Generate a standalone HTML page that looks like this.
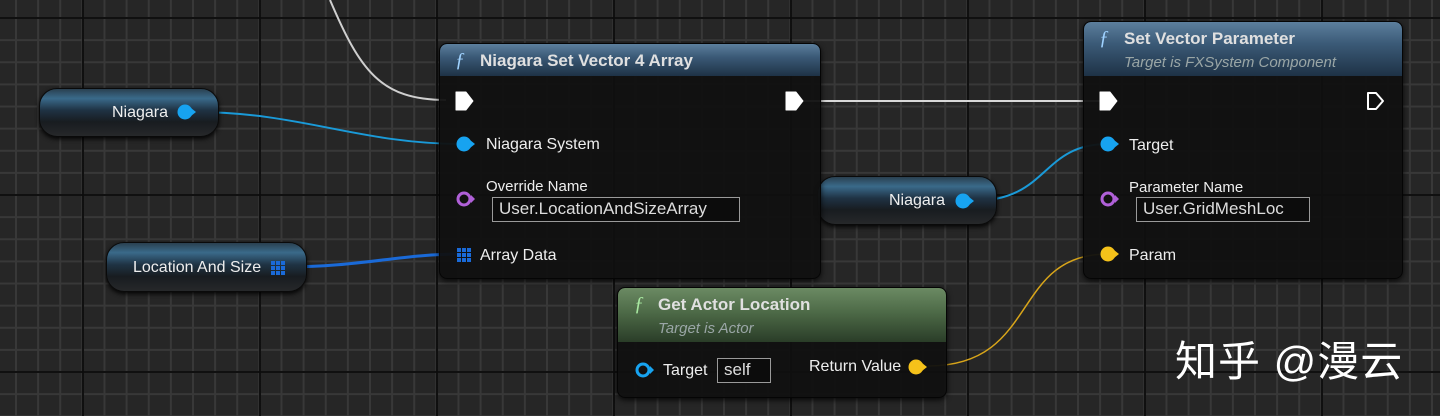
<!DOCTYPE html>
<html><head><meta charset="utf-8"><style>
*{margin:0;padding:0;box-sizing:border-box}
body{width:1440px;height:416px;overflow:hidden;position:relative;font-family:"Liberation Sans",sans-serif;color:#e8e8e8;
background-color:#262626;
background-image:
linear-gradient(90deg,rgba(12,12,12,.9) 0 2px,transparent 2px),
linear-gradient(0deg,rgba(12,12,12,.9) 0 2px,transparent 2px),
linear-gradient(90deg,#383838 0 2px,transparent 2px),
linear-gradient(0deg,#383838 0 2px,transparent 2px);
background-size:177px 177px,177px 177px,22.125px 22.125px,22.125px 22.125px;
background-position:82px 0,0 19px,15px 0,0 19px;}
.node{position:absolute;background:rgba(16,16,16,.95);border-radius:8px;box-shadow:0 2px 6px rgba(0,0,0,.8);border:1px solid #050505;overflow:hidden}
.hdr{position:absolute;left:0;right:0;top:0;border-radius:7px 7px 0 0}
.blue{background:linear-gradient(180deg,#5c7f9d 0%,#3b5a77 40%,#1e3246 100%)}
.green{background:linear-gradient(180deg,#6b8a63 0%,#4d6a47 45%,#2a3d28 100%)}
.t{position:absolute;font-weight:bold;font-size:17px;color:#e0e0e0;white-space:nowrap}
.f{position:absolute;font-style:italic;font-family:"Liberation Serif",serif;font-size:20px;color:#9fd2ff}
.sub{position:absolute;font-style:italic;font-size:15px;color:#9aa6a6;white-space:nowrap}
.lbl{position:absolute;font-size:16px;color:#eee;white-space:nowrap}
.box{position:absolute;border:1.5px solid #9a9a9a;font-size:17px;color:#ddd;padding-left:6px;line-height:22px;height:25px;background:#0c0c0c;white-space:nowrap}
.pill{position:absolute;border-radius:18px;background:linear-gradient(180deg,#2a4050 0%,#3a6a8a 20%,#1f3344 45%,#181c20 70%,#26282a 100%);box-shadow:0 2px 5px rgba(0,0,0,.9);border:1px solid #0a0a0a}
.pill span{position:absolute;font-size:16px;color:#eee;white-space:nowrap}
svg{position:absolute;left:0;top:0}
</style></head><body>
<svg width="1440" height="416">
<path d="M330 0 C360 70 380 100 446 100" stroke="#cfcfcf" stroke-width="2" fill="none"/>
<path d="M800 101 L1100 101" stroke="#d8d8d8" stroke-width="2" fill="none"/>
<path d="M195 112 C300 112 360 144 462 144" stroke="#1a9ad8" stroke-width="2" fill="none"/>
<path d="M285 267 C360 267 400 254 462 254" stroke="#1a6ad8" stroke-width="3" fill="none"/>
<path d="M972 201 C1050 201 1040 144 1108 144" stroke="#1a9ad8" stroke-width="2" fill="none"/>
<path d="M928 366 C1040 366 1010 254 1108 254" stroke="#d8a51a" stroke-width="1.5" fill="none"/>
</svg>

<div class="pill" style="left:39px;top:88px;width:180px;height:49px"><span style="left:72px;top:15px">Niagara</span></div>
<div class="pill" style="left:817px;top:176px;width:180px;height:49px"><span style="left:71px;top:15px">Niagara</span></div>
<div class="pill" style="left:106px;top:242px;width:201px;height:50px"><span style="left:26px;top:16px">Location And Size</span></div>

<div class="node" style="left:439px;top:43px;width:382px;height:236px">
<div class="hdr blue" style="height:32px"></div>
<span class="f" style="left:15px;top:5px">ƒ</span>
<span class="t" style="left:40px;top:7px">Niagara Set Vector 4 Array</span>
<span class="lbl" style="left:46px;top:92px">Niagara System</span>
<span class="lbl" style="left:46px;top:134px;font-size:15px">Override Name</span>
<div class="box" style="left:52px;top:153px;width:248px">User.LocationAndSizeArray</div>
<span class="lbl" style="left:40px;top:203px">Array Data</span>
</div>

<div class="node" style="left:1083px;top:21px;width:320px;height:258px">
<div class="hdr blue" style="height:54px"></div>
<span class="f" style="left:15px;top:5px">ƒ</span>
<span class="t" style="left:40px;top:7px">Set Vector Parameter</span>
<span class="sub" style="left:40px;top:32px">Target is FXSystem Component</span>
<span class="lbl" style="left:45px;top:115px">Target</span>
<span class="lbl" style="left:45px;top:157px;font-size:15px">Parameter Name</span>
<div class="box" style="left:52px;top:175px;width:174px">User.GridMeshLoc</div>
<span class="lbl" style="left:45px;top:225px">Param</span>
</div>

<div class="node" style="left:617px;top:287px;width:330px;height:111px">
<div class="hdr green" style="height:54px"></div>
<span class="f" style="left:16px;top:5px;color:#a8e8a0">ƒ</span>
<span class="t" style="left:40px;top:7px">Get Actor Location</span>
<span class="sub" style="left:40px;top:32px">Target is Actor</span>
<span class="lbl" style="left:45px;top:74px">Target</span>
<div class="box" style="left:99px;top:70px;width:54px">self</div>
<span class="lbl" style="left:191px;top:70px">Return Value</span>
</div>

<svg width="1440" height="416">
<path d="M456 92 h10 l7 9 l-7 9 h-10 z" fill="#fff" stroke="#fff" stroke-linejoin="round"/>
<path d="M786 92 h10 l7 9 l-7 9 h-10 z" fill="#fff" stroke="#fff" stroke-linejoin="round"/>
<path d="M1100 92 h10 l7 9 l-7 9 h-10 z" fill="#fff" stroke="#fff" stroke-linejoin="round"/>
<path d="M1368 93 h8 l7 8 l-7 8 h-8 z" fill="none" stroke="#fff" stroke-width="2" stroke-linejoin="round"/>
<g fill="#17a3f0">
<circle cx="185" cy="112" r="7.5"/><path d="M191 108 l5 4 l-5 4z"/>
<circle cx="963" cy="201" r="7.5"/><path d="M969 197 l5 4 l-5 4z"/>
<circle cx="464" cy="144" r="7.5"/><path d="M470 140 l5 4 l-5 4z"/>
<circle cx="1108" cy="144" r="7.5"/><path d="M1114 140 l5 4 l-5 4z"/>
</g>
<circle cx="643" cy="370" r="6" fill="none" stroke="#17a3f0" stroke-width="3"/><path d="M650 366 l4 4 l-4 4z" fill="#17a3f0"/>
<circle cx="464" cy="199" r="6" fill="none" stroke="#b060d8" stroke-width="3"/><path d="M471 195 l4 4 l-4 4z" fill="#b060d8"/>
<circle cx="1108" cy="199" r="6" fill="none" stroke="#b060d8" stroke-width="3"/><path d="M1115 195 l4 4 l-4 4z" fill="#b060d8"/>
<g fill="#f5c21a">
<circle cx="1108" cy="254" r="7.5"/><path d="M1114 250 l5 4 l-5 4z"/>
<circle cx="916" cy="367" r="7.5"/><path d="M922 363 l5 4 l-5 4z"/>
</g>
<g fill="#1a6ad8">
<rect x="457" y="248" width="4" height="4"/><rect x="462" y="248" width="4" height="4"/><rect x="467" y="248" width="4" height="4"/>
<rect x="457" y="253" width="4" height="4"/><rect x="462" y="253" width="4" height="4"/><rect x="467" y="253" width="4" height="4"/>
<rect x="457" y="258" width="4" height="4"/><rect x="462" y="258" width="4" height="4"/><rect x="467" y="258" width="4" height="4"/>
<rect x="271" y="261" width="4" height="4"/><rect x="276" y="261" width="4" height="4"/><rect x="281" y="261" width="4" height="4"/>
<rect x="271" y="266" width="4" height="4"/><rect x="276" y="266" width="4" height="4"/><rect x="281" y="266" width="4" height="4"/>
<rect x="271" y="271" width="4" height="4"/><rect x="276" y="271" width="4" height="4"/><rect x="281" y="271" width="4" height="4"/>
</g>
</svg>

<div style="position:absolute;left:1175px;top:328px;font-family:'Liberation Sans','Noto Sans CJK SC',sans-serif;font-size:42px;color:#fff;white-space:nowrap;letter-spacing:1px">知乎 @漫云</div>
</body></html>
